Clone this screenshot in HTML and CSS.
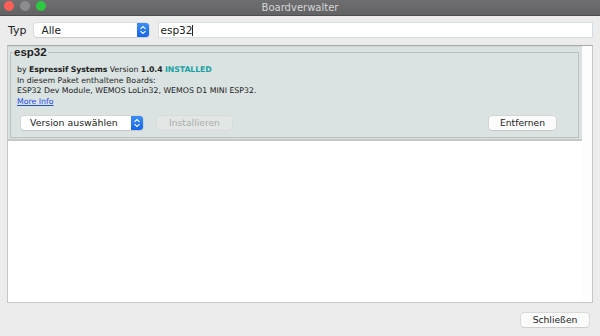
FILE: index.html
```html
<!DOCTYPE html>
<html lang="de">

<head>
  <meta charset="UTF-8">
  <title>Boardverwalter</title>
  <link rel="stylesheet" href="styles.css">
</head>

<body>
  <div class="window">
    <div class="titlebar">
      <div class="lights">
        <span class="light red"></span>
        <span class="light off"></span>
        <span class="light green"></span>
      </div>
      <span class="title">Boardverwalter</span>
    </div>

    <div class="toolbar">
      <label class="typ">Typ</label>
      <div class="select select-type">
        <span class="select-text">Alle</span>
        <span class="stepper">
          <svg width="8" height="10" viewBox="0 0 8 10"><path d="M1.5 3.8 L4 1.5 L6.5 3.8 M1.5 6.2 L4 8.5 L6.5 6.2" fill="none" stroke="#fff" stroke-width="1.1"/></svg>
        </span>
      </div>
      <div class="search">esp32<span class="caret"></span></div>
    </div>

    <div class="list">
      <div class="list-content">
        <div class="package">
          <fieldset class="package-box">
            <legend>esp32</legend>
            <div class="line">by <b>Espressif Systems</b> Version <b>1.0.4</b> <b class="installed">INSTALLED</b></div>
            <div class="line">In diesem Paket enthaltene Boards:</div>
            <div class="line">ESP32 Dev Module, WEMOS LoLin32, WEMOS D1 MINI ESP32.</div>
            <div class="line"><a class="more" href="#">More Info</a></div>
            <div class="actions">
              <div class="select select-version">
                <span class="select-text">Version auswählen</span>
                <span class="stepper">
                  <svg width="8" height="10" viewBox="0 0 8 10"><path d="M1.5 3.8 L4 1.5 L6.5 3.8 M1.5 6.2 L4 8.5 L6.5 6.2" fill="none" stroke="#fff" stroke-width="1.1"/></svg>
                </span>
              </div>
              <div class="btn disabled">Installieren</div>
              <div class="spacer"></div>
              <div class="btn btn-remove">Entfernen</div>
            </div>
          </fieldset>
        </div>
      </div>
      <div class="scrollbar"></div>
    </div>

    <div class="footer">
      <div class="btn btn-close">Schließen</div>
    </div>
  </div>
</body>

</html>
```

FILE: styles.css
```css
html,
body {
  margin: 0;
  padding: 0;
  width: 600px;
  height: 336px;
  overflow: hidden;
  background-color: #ececec;
  font-family: "DejaVu Sans", "Liberation Sans", sans-serif;
  color: #222;
}

.window {
  display: flex;
  flex-direction: column;
  height: 336px;
}

.titlebar {
  position: relative;
  height: 15px;
  background: linear-gradient(#6f6f72, #626265);
  border-bottom: 1px solid #4e4e50;
  display: flex;
  align-items: center;
  justify-content: center;
}

.lights {
  position: absolute;
  left: 4px;
  top: 1px;
  display: flex;
  gap: 6px;
}

.light {
  width: 10px;
  height: 10px;
  border-radius: 50%;
}

.light.red {
  background-color: #fc5f57;
}

.light.off {
  background-color: #8c8c8e;
}

.light.green {
  background-color: #2bc840;
}

.title {
  font-size: 10px;
  color: #d6d6d6;
  margin-top: -1px;
}

.toolbar {
  display: flex;
  align-items: center;
  height: 16px;
  margin: 6px 7px 0 8px;
}

.typ {
  font-size: 11px;
  margin-right: 7px;
}

.select {
  display: flex;
  align-items: center;
  height: 14px;
  background-color: #fff;
  border-radius: 3px;
  box-shadow: 0 0 0 0.5px #c9c9c9, 0 1px 1px rgba(0, 0, 0, 0.12);
  font-size: 10.5px;
}

.select-text {
  flex: 1;
  padding-left: 8px;
}

.stepper {
  width: 12px;
  height: 14px;
  background: linear-gradient(#3d8cf7, #1565ea);
  border-radius: 0 3px 3px 0;
  display: flex;
  align-items: center;
  justify-content: center;
}

.select-type {
  width: 115px;
}

.search {
  flex: 1;
  height: 14px;
  margin-left: 9px;
  background-color: #fff;
  border: 1px solid #d3dde6;
  font-size: 10.5px;
  padding-left: 2px;
  line-height: 14px;
}

.caret {
  display: inline-block;
  width: 1px;
  height: 11px;
  background-color: #222;
  vertical-align: -2px;
}

.list {
  display: flex;
  height: 256px;
  margin: 7px 7px 0 7px;
  background-color: #fff;
  border: 1px solid #c6c6c6;
  border-top-color: #a9a9a9;
}

.list-content {
  flex: 1;
}

.scrollbar {
  width: 10px;
  background-color: #fdfdfd;
}

.package {
  padding: 0 3px 1px 2px;
  background-color: #dbe3e2;
  border-top: 1px solid #d0d6d5;
  border-bottom: 2px solid #c4c9c8;
}

.package-box {
  margin: 0;
  padding: 8px 6px 7px 6px;
  border: 1px solid #b9c0bf;
  font-size: 7.8px;
}

.package-box legend {
  font-family: "Liberation Sans", "DejaVu Sans", sans-serif;
  font-size: 11.5px;
  font-weight: bold;
  line-height: 10px;
  padding: 0 1px;
  margin-left: -4px;
  color: #222;
}

.line {
  line-height: 10.7px;
}

.line b {
  letter-spacing: -0.1px;
}

.installed {
  color: #17a1a5;
}

.more {
  color: #1c4ee8;
  text-decoration: underline;
}

.actions {
  display: flex;
  align-items: center;
  margin: 8px 16px 0 4px;
}

.select-version {
  width: 122px;
  font-size: 9.4px;
}

.select-version .select-text {
  padding-left: 9px;
}

.btn {
  height: 14px;
  line-height: 14px;
  padding: 0 10px;
  background-color: #fbfbfb;
  border-radius: 3px;
  box-shadow: 0 0 0 0.5px #c7c7c7, 0 1px 1px rgba(0, 0, 0, 0.1);
  font-size: 9.2px;
  text-align: center;
}

.btn.disabled {
  width: 75px;
  padding: 0;
  margin-left: 14px;
  background-color: #e2e7e6;
  color: #a9acac;
  box-shadow: 0 0 0 0.5px #d0d5d4;
}

.btn-remove {
  width: 67px;
  padding: 0;
}

.spacer {
  flex: 1;
}

.footer {
  display: flex;
  justify-content: flex-end;
  margin: 10px 11px 0 0;
}

.btn-close {
  width: 68px;
  padding: 0;
}
```
